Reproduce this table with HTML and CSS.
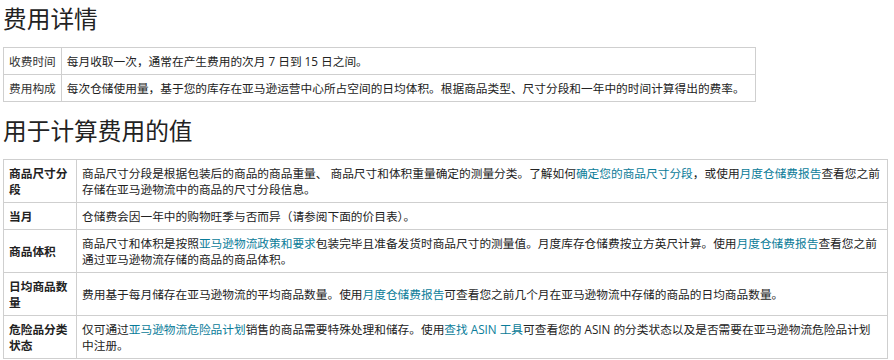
FILE: index.html
```html
<!DOCTYPE html>
<html lang="zh-CN">
<head>
<meta charset="utf-8">
<title>费用详情</title>
<link rel="stylesheet" href="styles.css">
</head>
<body>
<h2 class="title first">费用详情</h2>
<table class="tbl tbl-fee">
  <tr><td class="key">收费时间</td><td>每月收取一次，通常在产生费用的次月 7 日到 15 日之间。</td></tr>
  <tr><td class="key">费用构成</td><td>每次仓储使用量，基于您的库存在亚马逊运营中心所占空间的日均体积。根据商品类型、尺寸分段和一年中的时间计算得出的费率。</td></tr>
</table>
<h2 class="title">用于计算费用的值</h2>
<table class="tbl tbl-values">
  <tr><td class="key strong">商品尺寸分段</td><td>商品尺寸分段是根据包装后的商品的商品重量、 商品尺寸和体积重量确定的测量分类。了解如何<a href="#">确定您的商品尺寸分段</a>，或使用<a href="#">月度仓储费报告</a>查看您之前存储在亚马逊物流中的商品的尺寸分段信息。</td></tr>
  <tr><td class="key strong">当月</td><td>仓储费会因一年中的购物旺季与否而异（请参阅下面的价目表）。</td></tr>
  <tr><td class="key strong">商品体积</td><td>商品尺寸和体积是按照<a href="#">亚马逊物流政策和要求</a>包装完毕且准备发货时商品尺寸的测量值。月度库存仓储费按立方英尺计算。使用<a href="#">月度仓储费报告</a>查看您之前通过亚马逊物流存储的商品的商品体积。</td></tr>
  <tr><td class="key strong">日均商品数量</td><td>费用基于每月储存在亚马逊物流的平均商品数量。使用<a href="#">月度仓储费报告</a>可查看您之前几个月在亚马逊物流中存储的商品的日均商品数量。</td></tr>
  <tr><td class="key strong">危险品分类状态</td><td>仅可通过<a href="#">亚马逊物流危险品计划</a>销售的商品需要特殊处理和储存。使用<a href="#">查找 ASIN 工具</a>可查看您的 ASIN 的分类状态以及是否需要在亚马逊物流危险品计划中注册。</td></tr>
</table>
</body>
</html>
```
FILE: styles.css
```css
html, body {
  margin: 0;
  padding: 0;
  background: #fff;
}
body {
  padding: 4px 3px;
  font-family: "Open Sans", "Noto Sans CJK SC", sans-serif;
  color: #222;
}
.title {
  margin: 14px 0 13px;
  font-size: 23.7px;
  line-height: 30px;
  font-weight: 400;
  color: #222;
}
.title.first {
  margin-top: 0;
}
.tbl {
  border-collapse: collapse;
  font-size: 11.7px;
  line-height: 16px;
}
.tbl td {
  border: 1px solid #cfcfcf;
  padding: 5px;
  vertical-align: middle;
  color: #222;
}
.tbl-fee {
  width: 753px;
}
.tbl-fee .key {
  width: 1%;
  white-space: nowrap;
  color: #333;
}
.tbl-values {
  width: 885px;
  table-layout: fixed;
}
.tbl-values .key {
  width: 62px;
}
.strong {
  font-weight: 700;
  color: #333;
}
.tbl a {
  color: #0a7c99;
  text-decoration: none;
}
```
